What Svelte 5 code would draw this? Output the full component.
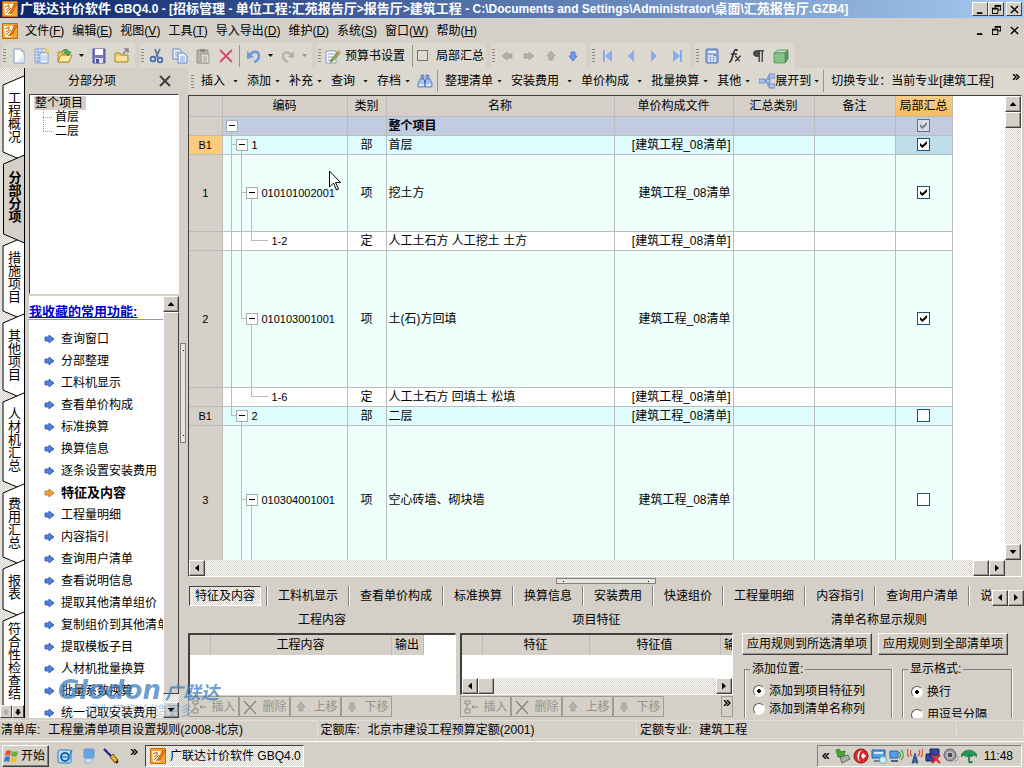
<script lang="ts">
	type Row = {
		no: string;
		h: number;
		kind: 'root' | 'part' | 'item' | 'quota';
		guides: string[];
		code: string;
		type: string;
		name: string;
		file: string;
		check: boolean | null;
		current?: boolean;
	};

	const title =
		'广联达计价软件 GBQ4.0 - [招标管理 - 单位工程:汇苑报告厅>报告厅>建筑工程 - C:\\Documents and Settings\\Administrator\\桌面\\汇苑报告厅.GZB4]';
	// runs of Chinese are set one size larger than the Latin text
	const titleRuns = title.split(/([\u4e00-\u9fff]+)/);

	const menus = [
		['文件', 'F'],
		['编辑', 'E'],
		['视图', 'V'],
		['工具', 'T'],
		['导入导出', 'D'],
		['维护', 'D'],
		['系统', 'S'],
		['窗口', 'W'],
		['帮助', 'H']
	];

	const sideTabs = [
		{ label: '工程概况', h: 87 },
		{ label: '分部分项', h: 90 },
		{ label: '措施项目', h: 85 },
		{ label: '其他项目', h: 87 },
		{ label: '人材机汇总', h: 99 },
		{ label: '费用汇总', h: 84 },
		{ label: '报表', h: 60 },
		{ label: '符合性检查结', h: 104 }
	];

	const favourites = [
		'查询窗口',
		'分部整理',
		'工料机显示',
		'查看单价构成',
		'标准换算',
		'换算信息',
		'逐条设置安装费用',
		'特征及内容',
		'工程量明细',
		'内容指引',
		'查询用户清单',
		'查看说明信息',
		'提取其他清单组价',
		'复制组价到其他清单',
		'提取模板子目',
		'人材机批量换算',
		'批量系数换算',
		'统一记取安装费用'
	];

	const file = '建筑工程_08清单';

	const rows: Row[] = [
		{ no: '', h: 19, kind: 'root', guides: [], code: '', type: '', name: '整个项目', file: '', check: true },
		{ no: 'B1', h: 19, kind: 'part', guides: ['tee'], code: '1', type: '部', name: '首层', file: `[${file}]`, check: true, current: true },
		{ no: '1', h: 77, kind: 'item', guides: ['pass', 'tee'], code: '010101002001', type: '项', name: '挖土方', file, check: true },
		{ no: '', h: 19, kind: 'quota', guides: ['pass', 'pass', 'elbow'], code: '1-2', type: '定', name: '人工土石方 人工挖土 土方', file: `[${file}]`, check: null },
		{ no: '2', h: 137, kind: 'item', guides: ['pass', 'end'], code: '010103001001', type: '项', name: '土(石)方回填', file, check: true },
		{ no: '', h: 19, kind: 'quota', guides: ['pass', 'none', 'elbow'], code: '1-6', type: '定', name: '人工土石方 回填土 松填', file: `[${file}]`, check: null },
		{ no: 'B1', h: 19, kind: 'part', guides: ['end'], code: '2', type: '部', name: '二层', file: `[${file}]`, check: false },
		{ no: '3', h: 149, kind: 'item', guides: ['none', 'tee'], code: '010304001001', type: '项', name: '空心砖墙、砌块墙', file, check: false }
	];

	const detailTabs = [
		'特征及内容',
		'工料机显示',
		'查看单价构成',
		'标准换算',
		'换算信息',
		'安装费用',
		'快速组价',
		'工程量明细',
		'内容指引',
		'查询用户清单',
		'说明信息'
	];

	const editButtons = [
		['insert', '插入'],
		['delete', '删除'],
		['up', '上移'],
		['down', '下移']
	];

	const trayIcons = ['device', 'shield', 'monitor', 'network', 'antenna', 'offline', 'speaker', 'umbrella'];

	let activeSide = $state('分部分项');
	let activeFavourite = $state('特征及内容');
	let activeDetail = $state('特征及内容');
</script>

{#snippet icon(name: string)}
	<svg class="icon" viewBox="0 0 16 16" aria-hidden="true">
		{#if name === 'logo'}
			<rect x="0" y="0" width="16" height="16" rx="1" fill="#c8690c" />
			<rect x="1" y="1" width="14" height="14" fill="#f5a52c" />
			<path d="M2 3h9l-1 11H3z" fill="#fff6df" />
			<path d="M3 6l4-2v3L4 9M4 12l5-5M6 13l4-4" stroke="#b8610e" stroke-width="1" fill="none" />
			<path d="M8 11l5-9 2 1-5 9-2 1z" fill="#e87d10" stroke="#a8540a" stroke-width=".6" />
		{:else if name === 'new'}
			<path d="M3 1h7l3 3v11H3z" fill="#fff" stroke="#7f9cc8" />
			<path d="M10 1v3h3z" fill="#9fb8df" />
			<path d="M5 14h8V7z" fill="#dfe9f8" />
		{:else if name === 'sheet'}
			<path d="M1 1h11v14H1z" fill="#e9f0fb" stroke="#83a3d4" />
			<path d="M1 4h11M1 7h11M1 10h11M1 13h11M4 1v14M8 1v14" stroke="#83a3d4" />
			<path d="M6 5h8v10H6z" fill="#fff" stroke="#7c9cd0" />
			<path d="M8 7v6M10 7v6M12 7v6" stroke="#9ab6e2" />
			<path d="M13 0v6M10 3h6M11 1l4 4M15 1l-4 4" stroke="#f3cf57" />
		{:else if name === 'open'}
			<path d="M1 14V4h4l1 2h6v8z" fill="#f1cf6c" stroke="#b18c2c" />
			<path d="M1 14l3-7h11l-3 7z" fill="#ffe9a0" stroke="#b18c2c" />
			<path d="M5 4c2-4 6-3 7 0h2l-3 4-4-4h2c-1-2-3-1-4 0z" fill="#4fae44" stroke="#2d7d28" stroke-width=".6" />
		{:else if name === 'save'}
			<path d="M2 1h12v14H2z" fill="#7478c8" stroke="#4a4e9c" />
			<path d="M4 1h8v6H4z" fill="#fff" />
			<path d="M4 10h8v5H4z" fill="#d9def2" />
			<path d="M5 11h3v4H5z" fill="#4a4e9c" />
		{:else if name === 'exit'}
			<path d="M1 14V5h5l1 2h7v7z" fill="#eec86a" stroke="#ac8a34" />
			<path d="M2 13V8h11v5z" fill="#f9e2a0" />
			<path d="M9 6l4-4M10 1h4v4" stroke="#7a7f95" fill="none" stroke-width="1.4" />
		{:else if name === 'cut'}
			<path d="M6 1l3 8M11 1L7 9" stroke="#62759f" stroke-width="1.8" />
			<circle cx="4" cy="11" r="2.4" fill="none" stroke="#3f6bb4" stroke-width="1.6" />
			<circle cx="11" cy="12" r="2.4" fill="none" stroke="#3f6bb4" stroke-width="1.6" />
		{:else if name === 'copy'}
			<path d="M1 1h6l2 2v8H1z" fill="#eef4ff" stroke="#5e88c9" />
			<path d="M3 4h4M3 6h4M3 8h4" stroke="#82a5dc" />
			<path d="M6 5h6l3 3v7H6z" fill="#eef4ff" stroke="#5e88c9" />
			<path d="M8 9h5M8 11h5M8 13h5" stroke="#82a5dc" />
		{:else if name === 'paste'}
			<path d="M2 2h11v13H2z" fill="#b5b2aa" stroke="#96938b" />
			<path d="M5 1h5v3H5z" fill="#8d8a83" />
			<path d="M6 6h8v9H6z" fill="#dedbd3" stroke="#9d9a92" />
			<path d="M8 9h4M8 11h4M8 13h4" stroke="#a9a69e" />
		{:else if name === 'cross'}
			<path d="M2 2l12 12M14 2L2 14" stroke="#d9486a" stroke-width="1.8" />
		{:else if name === 'undo'}
			<path d="M4 7c3-5 9-4 9 1 0 3-2 5-5 6" fill="none" stroke="#6f97dd" stroke-width="2.4" />
			<path d="M1 3v8l7-2z" fill="#6f97dd" />
		{:else if name === 'redo'}
			<path d="M11 7C8 3 3 4 3 8c0 3 2 5 5 6" fill="none" stroke="#b3b0a8" stroke-width="2.2" />
			<path d="M14 3v7l-6-1z" fill="#b3b0a8" />
		{:else if name === 'edit'}
			<path d="M1 3h10v12H1z" fill="#f8fbff" stroke="#8e9db8" />
			<path d="M3 6h6M3 9h5M3 12h4" stroke="#8e9db8" />
			<path d="M6 12l7-9 2 2-7 8-3 1z" fill="#9aab58" stroke="#5f6a33" stroke-width=".7" />
			<path d="M12 4l1-2 3 2-1 2z" fill="#e0a040" />
		{:else if name === 'left'}
			<path d="M3 8l5-4v2h5v4H8v2z" fill="#b5b2ab" stroke="#9d9a93" stroke-width=".7" />
		{:else if name === 'right'}
			<path d="M13 8L8 4v2H3v4h5v2z" fill="#b5b2ab" stroke="#9d9a93" stroke-width=".7" />
		{:else if name === 'up'}
			<path d="M8 3l4 5h-2v4H6V8H4z" fill="#b5b2ab" stroke="#9d9a93" stroke-width=".7" />
		{:else if name === 'down'}
			<path d="M8 13l4-5h-2V4H6v4H4z" fill="#b5b2ab" stroke="#9d9a93" stroke-width=".7" />
		{:else if name === 'downBlue'}
			<path d="M8 13l4-5h-2V4H6v4H4z" fill="#7599ea" stroke="#4c6fc4" stroke-width=".8" />
		{:else if name === 'first'}
			<path d="M3 2h2v12H3z" fill="#86acee" />
			<path d="M12 2v12L5 8z" fill="#86acee" />
		{:else if name === 'prev'}
			<path d="M11 2v12L5 8z" fill="#86acee" />
		{:else if name === 'next'}
			<path d="M5 2v12l6-6z" fill="#86acee" />
		{:else if name === 'last'}
			<path d="M11 2h2v12h-2z" fill="#86acee" />
			<path d="M4 2v12l7-6z" fill="#86acee" />
		{:else if name === 'calc'}
			<rect x="2" y="1" width="12" height="14" rx="1" fill="#8fa9df" stroke="#5b79b9" />
			<path d="M4 3h8v2H4z" fill="#eef4ff" />
			<path d="M4 8h8M4 10.500h8M4 13h8" stroke="#fff" stroke-width="1.500" stroke-dasharray="2 1" />
			<path d="M10 7h2v1h-2z" fill="#e05050" />
		{:else if name === 'formula'}
			<path d="M2 14c3 1 4-10 6-12 1-1 2 0 2 1M4 6h6" stroke="#33373d" stroke-width="1.700" fill="none" />
			<path d="M8 8c2 0 3 5 5 5M14 8c-2 0-4 5-6 5" stroke="#33373d" stroke-width="1.300" fill="none" />
		{:else if name === 'mark'}
			<path d="M8 2H14v1.500H13V14h-1.500V3.500H10V14H8.500V9C4 9 3 7 3 5.500 3 3 5 2 8 2z" fill="#4a4c52" />
		{:else if name === 'cube'}
			<path d="M1 5l4-3h10l-3 3z" fill="#b3deb3" stroke="#4c8650" stroke-width=".7" />
			<path d="M12 5l3-3v9l-3 4z" fill="#5c9c60" stroke="#3f7444" stroke-width=".7" />
			<path d="M1 5h11v10H1z" fill="#86c58a" stroke="#4c8650" stroke-width=".7" />
		{:else if name === 'find'}
			<path d="M4 2h3v4H4zM9 2h3v4H9z" fill="#7c9cd8" stroke="#5577b8" stroke-width=".6" />
			<path d="M3 6h4l1 3v5H1v-4zM9 6h4l2 4v4H8V9z" fill="#a3bfee" stroke="#5577b8" stroke-width=".8" />
			<path d="M2 11h5v2H2zM9 11h5v2H9z" fill="#dbe7fb" />
			<path d="M7 7h2v3H7z" fill="#4b6db2" />
		{:else if name === 'expand'}
			<path d="M5 8h4M9 3v10M9 3h2M9 13h2" stroke="#6986b9" fill="none" />
			<path d="M0 6h6v4H0zM10 1h6v4h-6zM10 11h6v4h-6zM7 6h4v4H7z" fill="#a9c4f2" stroke="#5f82c4" stroke-width=".8" />
		{:else if name === 'insert'}
			<path d="M2 2h5v3H2zM2 10h5v4H2zM4 5v5M15 8H9M11 6L9 8l2 2" fill="none" stroke="#8e8b84" />
		{:else if name === 'delete'}
			<path d="M2 2l12 13M14 2L2 15" stroke="#8e8b84" stroke-width="1.500" />
		{:else if name === 'arrow'}
			<path d="M4 6h4V4l5 4-5 4v-2H4z" class="fill" />
		{:else if name === 'windows'}
			<path d="M3 3c2-1 4-1 5 0L7 8C6 7 4 7 2 8z" fill="#e2542b" />
			<path d="M9 3c2 1 4 1 6 0l-1 5c-2 1-4 1-6 0z" fill="#6cae3c" />
			<path d="M2 9c2-1 4-1 5 0l-1 5c-1-1-3-1-5 0z" fill="#3c74d4" />
			<path d="M8 9c2 1 4 1 6 0l-1 5c-2 1-4 1-6 0z" fill="#f4c02e" />
		{:else if name === 'outlook'}
			<rect x="1" y="2" width="13" height="13" rx="2" fill="#bfe1f7" stroke="#2d7db8" />
			<circle cx="8" cy="9" r="4" fill="none" stroke="#1763a3" stroke-width="2" />
			<path d="M5 9h7l3-7" stroke="#2f8ccc" stroke-width="1.400" fill="none" />
		{:else if name === 'desktop'}
			<rect x="4" y="1" width="10" height="9" rx="1" fill="#5ea6ee" stroke="#8492b0" />
			<path d="M5 12c2-2 6-2 8 0l-2 3H5z" fill="#cfdcf2" stroke="#94a6c9" stroke-width=".7" />
		{:else if name === 'brush'}
			<path d="M1 1l7 7" stroke="#2222a8" stroke-width="2.400" />
			<path d="M7 9l3-3 5 6-3 3z" fill="#e5b22d" stroke="#6b4c10" />
			<path d="M13 15l2-2" stroke="#222" stroke-width="2" />
		{:else if name === 'device'}
			<path d="M1 2l3-1 2 3 4-1-1 6H3z" fill="#48a63c" stroke="#216a1d" stroke-width=".7" />
			<path d="M5 9l8-2 2 4-8 4z" fill="#a4b2a8" stroke="#49544c" stroke-width=".8" />
		{:else if name === 'shield'}
			<circle cx="8" cy="8" r="7" fill="#d8292b" stroke="#8d1010" />
			<path d="M9 2C4 3 3 10 7 14 5 9 6 5 9 2z" fill="#fff" />
			<path d="M10 5l3 3-3 3-2-3z" fill="#fff" />
		{:else if name === 'monitor'}
			<path d="M1 2h13v8H1z" fill="#4f9fe4" stroke="#285f9c" />
			<path d="M3 4h9v2H3z" fill="#d8ecff" />
			<path d="M3 13h7" stroke="#6982a0" stroke-width="2" />
			<circle cx="12" cy="12" r="3.500" fill="#d6eef6" stroke="#6aa7bf" />
		{:else if name === 'network'}
			<path d="M1 3h8v7H1z" fill="#55a4ea" stroke="#2d639d" />
			<path d="M2 13h7" stroke="#3e6388" stroke-width="2" />
			<path d="M10 4c2 2 2 4 0 6M12 2c3 3 3 7 0 10" stroke="#43a63b" stroke-width="1.300" fill="none" />
		{:else if name === 'antenna'}
			<path d="M8 5l-3 10h2l1-4 1 4h2z" fill="#35598f" stroke="#35598f" />
			<path d="M5 8C3 6 3 4 4 2M11 8c2-2 2-4 1-6M2 9C0 6 0 3 1 1M14 9c2-3 2-6 1-8" stroke="#dc5b42" stroke-width="1.400" fill="none" />
		{:else if name === 'offline'}
			<path d="M5 1h9v7H5zM1 6h8v7H1z" fill="#34459e" stroke="#1a2566" />
			<path d="M7 7l8 8M15 7l-8 8" stroke="#de2b2b" stroke-width="2.200" />
		{:else if name === 'speaker'}
			<circle cx="7" cy="7" r="6" fill="#989ca4" stroke="#5c6068" />
			<circle cx="7" cy="7" r="3" fill="#4b4f58" stroke="#d5d8de" />
			<path d="M11 14c3-1 4-3 4-6" stroke="#8d94c4" fill="none" />
		{:else if name === 'umbrella'}
			<path d="M0 9c0-9 16-9 16 0l-3-2-3 2-2-2-2 2-3-2z" fill="#1f9a53" stroke="#0d6a37" stroke-width=".6" />
			<path d="M8 7v6c0 2 3 2 3 0" stroke="#0d6a37" stroke-width="1.500" fill="none" />
		{/if}
	</svg>
{/snippet}

{#snippet winButtons()}
	<button aria-label="最小化"><svg viewBox="0 0 10 10"><path d="M1 8h6v2H1z" /></svg></button>
	<button aria-label="还原"
		><svg viewBox="0 0 10 10"><path d="M3 0h7v6H7v4H0V3h3zM4 2v1h3v2h2V2zM1 5v4h5V5z" fill-rule="evenodd" /></svg></button
	>
	<button class="close" aria-label="关闭"
		><svg viewBox="0 0 10 10"><path d="M1 1l8 8M9 1L1 9" stroke="#000" stroke-width="1.600" /></svg></button
	>
{/snippet}

{#snippet tool(name: string, label: string)}
	<button class="tool" aria-label={label}>{@render icon(name)}</button>
{/snippet}

{#snippet caret()}
	<i class="caret"></i>
{/snippet}

{#snippet scrollBtn(dir: string)}
	<button class="scroll-btn" aria-label="滚动"><i class="tri {dir}"></i></button>
{/snippet}

{#snippet drop(label: string)}
	<button class="drop">{label}{@render caret()}</button>
{/snippet}

{#snippet chevrons()}
	<svg class="chevrons" viewBox="0 0 8 6" aria-hidden="true"><path d="M1 0l3 3-3 3M4 0l3 3-3 3" /></svg>
{/snippet}

{#snippet editBar()}
	<div class="edit-bar">
		{#each editButtons as [name, label]}
			<button disabled>{@render icon(name)}{label}</button>
		{/each}
	</div>
{/snippet}

<div class="app">
	<header class="title-bar">
		{@render icon('logo')}
		<h1>{#each titleRuns as run, i}{#if i % 2}<span>{run}</span>{:else}{run}{/if}{/each}</h1>
		<div class="win-buttons">{@render winButtons()}</div>
	</header>

	<nav class="menu-bar">
		{@render icon('logo')}
		{#each menus as [label, key]}
			<button>{label}(<u>{key}</u>)</button>
		{/each}
		<div class="win-buttons flat">{@render winButtons()}</div>
	</nav>

	<div class="toolbar">
		<div class="group">
			<i class="grip"></i>
			{@render tool('new', '新建')}
			{@render tool('sheet', '新建表')}
			{@render tool('open', '打开')}
			{@render caret()}
			{@render tool('save', '保存')}
			{@render tool('exit', '关闭')}
		</div>
		<div class="group">
			<i class="grip"></i>
			{@render tool('cut', '剪切')}
			{@render tool('copy', '复制')}
			{@render tool('paste', '粘贴')}
			{@render tool('cross', '删除')}
			<i class="sep"></i>
			{@render tool('undo', '撤销')}
			{@render caret()}
			{@render tool('redo', '恢复')}
			<i class="caret off"></i>
		</div>
		<div class="group">
			<i class="grip"></i>
			<button class="text-tool">{@render icon('edit')}预算书设置</button>
			<i class="sep"></i>
			<label class="check-tool"><input type="checkbox" class="flat-check" />局部汇总</label>
		</div>
		<div class="group nav">
			<i class="grip"></i>
			{@render tool('left', '左移')}
			{@render tool('right', '右移')}
			{@render tool('up', '上移')}
			{@render tool('downBlue', '下移')}
		</div>
		<div class="group">
			<i class="grip"></i>
			{@render tool('first', '首行')}
			{@render tool('prev', '上一行')}
			{@render tool('next', '下一行')}
			{@render tool('last', '末行')}
		</div>
		<div class="group">
			<i class="grip"></i>
			{@render tool('calc', '计算器')}
			{@render tool('formula', '函数')}
			{@render tool('mark', '段落')}
			{@render tool('cube', '图元')}
		</div>
	</div>

	<div class="body">
		<div class="side-tabs">
			<div class="tab-list">
				{#each sideTabs as tab}
					<button class="side-tab" class:active={tab.label === activeSide} style:height="{tab.h}px" onclick={() => (activeSide = tab.label)}>
						<svg viewBox="0 0 22 {tab.h}" aria-hidden="true">
							<path d="M22 1L1 10V{tab.h - 10}L22 {tab.h - 1}" />
						</svg>
						<span>{tab.label}</span>
					</button>
				{/each}
			</div>
			<div class="tab-scroll">
				<button aria-label="上一页">{@render icon('up')}</button>
				<button aria-label="下一页" class="dark">{@render icon('down')}</button>
			</div>
		</div>

		<aside class="side">
			<div class="side-head">
				<h2>分部分项</h2>
				<button aria-label="关闭"><svg viewBox="0 0 12 12"><path d="M1 1l10 10M11 1L1 11" /></svg></button>
			</div>
			<ul class="project-tree">
				<li>
					<span class="selected">整个项目</span>
					<ul>
						<li>首层</li>
						<li>二层</li>
					</ul>
				</li>
			</ul>
			<div class="favourites">
				<div class="fav-list">
					<h3>我收藏的常用功能:</h3>
					{#each favourites as item}
						<a href="#top" class:on={item === activeFavourite} onclick={() => (activeFavourite = item)}>{@render icon('arrow')}{item}</a>
					{/each}
				</div>
				<div class="vscroll plain">
					{@render scrollBtn('n')}
					<i class="long-thumb"></i>
					<i class="track"></i>
					{@render scrollBtn('s')}
				</div>
			</div>
			<div class="watermark">
				<p><b>Glodon</b>广联达</p>
				<small>成为了您 创造更多</small>
			</div>
		</aside>
		<div class="v-splitter"><i></i></div>

		<main>
			<div class="toolbar second">
				<i class="grip"></i>
				<button class="drop wide">插入{@render caret()}</button>
				{@render drop('添加')}
				{@render drop('补充')}
				<button class="drop wide">查询{@render caret()}</button>
				{@render drop('存档')}
				{@render tool('find', '查找')}
				<i class="sep"></i>
				{@render drop('整理清单')}
				<button class="drop wide">安装费用{@render caret()}</button>
				<button class="drop wide">单价构成{@render caret()}</button>
				{@render drop('批量换算')}
				{@render drop('其他')}
				<button class="drop with-icon">{@render icon('expand')}展开到{@render caret()}</button>
				<i class="sep"></i>
				<button class="drop">切换专业：当前专业[建筑工程]</button>
				<button class="more" aria-label="更多">{@render chevrons()}</button>
			</div>

			<div class="grid-box">
				<div class="grid-view">
					<table class="bill">
						<colgroup>
							<col class="c-no" />
							<col class="c-code" />
							<col class="c-type" />
							<col class="c-name" />
							<col class="c-file" />
							<col class="c-sum" />
							<col class="c-sum" />
							<col class="c-part" />
						</colgroup>
						<thead>
							<tr>
								<th></th>
								<th>编码</th>
								<th>类别</th>
								<th>名称</th>
								<th>单价构成文件</th>
								<th>汇总类别</th>
								<th>备注</th>
								<th class="hot">局部汇总</th>
							</tr>
						</thead>
						<tbody>
							{#each rows as row}
								<tr class={row.kind} class:current={row.current}>
									<td class="no">{row.no}</td>
									<td class="code">
										<div class="tree" style:height="{row.h - 1}px">
											{#each row.guides as guide}
												<i class="guide {guide}"></i>
											{/each}
											{#if row.kind !== 'quota'}
												<span class="node"><button aria-label="折叠"></button></span>
											{/if}
											<span>{row.code}</span>
										</div>
									</td>
									<td class="mid">{row.type}</td>
									<td>{row.name}</td>
									<td class="end">{row.file}</td>
									<td></td>
									<td></td>
									<td class="mid part-sum">
										{#if row.check !== null}
											<input type="checkbox" class="check" checked={row.check} disabled={row.kind === 'root'} aria-label="局部汇总" />
										{/if}
									</td>
								</tr>
							{/each}
						</tbody>
					</table>
				</div>
				<div class="vscroll">
					{@render scrollBtn('n')}
					<i class="thumb"></i>
					<i class="track"></i>
					{@render scrollBtn('s')}
				</div>
				<div class="hscroll">
					{@render scrollBtn('w')}
					<i class="track"></i>
					<i class="thumb"></i>
					{@render scrollBtn('e')}
				</div>
				<svg class="pointer" viewBox="0 0 12 21" aria-hidden="true">
					<path d="M.5 1v16l4-4 3 7 2-1-3-6.500h5z" fill="#fff" stroke="#000" />
				</svg>
			</div>

			<div class="h-splitter"><i></i></div>

			<div class="detail-tabs">
				<div class="detail-list">
					{#each detailTabs as tab}
						<button class:active={tab === activeDetail} onclick={() => (activeDetail = tab)}>{tab}</button>
					{/each}
				</div>
				<div class="tab-arrows">
					{@render scrollBtn('w')}
					{@render scrollBtn('e')}
				</div>
			</div>

			<div class="details">
				<section>
					<h4>工程内容</h4>
					<div class="sunken">
						<table class="mini">
							<thead>
								<tr><th class="w20"></th><th class="w180">工程内容</th><th class="w32">输出</th></tr>
							</thead>
						</table>
					</div>
					{@render editBar()}
				</section>

				<section>
					<h4>项目特征</h4>
					<div class="sunken">
						<table class="mini">
							<thead>
								<tr><th class="w20"></th><th class="w108">特征</th><th class="w132">特征值</th><th class="w32">输出</th></tr>
							</thead>
						</table>
						<div class="hscroll">
							{@render scrollBtn('w')}
							<i class="thumb"></i>
							<i class="track"></i>
							{@render scrollBtn('e')}
						</div>
					</div>
					<div class="edit-row">
						{@render editBar()}
						<button class="more boxed" aria-label="更多">{@render chevrons()}</button>
					</div>
				</section>

				<section class="rules">
					<h4>清单名称显示规则</h4>
					<div class="rule-buttons">
						<button>应用规则到所选清单项</button>
						<button>应用规则到全部清单项</button>
					</div>
					<div class="rule-sets">
						<fieldset>
							<legend>添加位置:</legend>
							<label><input type="radio" name="place" checked />添加到项目特征列</label>
							<label><input type="radio" name="place" />添加到清单名称列</label>
						</fieldset>
						<fieldset class="format">
							<legend>显示格式:</legend>
							<label><input type="radio" name="format" checked />换行</label>
							<label><input type="radio" name="format" />用逗号分隔</label>
						</fieldset>
					</div>
				</section>
			</div>
		</main>
	</div>

	<div class="status-bar">
		<div><span>清单库:</span><span>工程量清单项目设置规则(2008-北京)</span></div>
		<div><span>定额库:</span><span>北京市建设工程预算定额(2001)</span></div>
		<div><span>定额专业:</span><span>建筑工程</span></div>
		<div class="last"></div>
	</div>

	<footer class="task-bar">
		<button class="start">{@render icon('windows')}开始</button>
		<div class="quick">
			{@render tool('outlook', '邮件')}
			{@render tool('desktop', '显示桌面')}
			{@render tool('brush', '画笔')}
		</div>
		<button class="more" aria-label="更多">{@render chevrons()}</button>
		<button class="task">{@render icon('logo')}广联达计价软件 GBQ4.0</button>
		<div class="tray">
			<button class="fold" aria-label="折叠">{@render chevrons()}</button>
			{#each trayIcons as name}
				{@render icon(name)}
			{/each}
			<time>11:48</time>
		</div>
	</footer>
</div>

<style>
	:global(body) {
		background: #d4d0c8;
		overflow: hidden;
	}

	.app {
		--face: #d4d0c8;
		--light: #fff;
		--shade: #808080;
		--dark: #404040;
		display: flex;
		flex-direction: column;
		height: 100vh;
		overflow: hidden;
		background: var(--face);
		color: #000;
		font: 12px/16px 'Liberation Sans', 'Noto Sans CJK SC', sans-serif;
		white-space: nowrap;
	}

	.app :global(*) {
		box-sizing: border-box;
	}

	button,
	input {
		font: inherit;
		color: inherit;
	}

	button {
		margin: 0;
		padding: 0;
		border: 0;
		background: none;
	}

	h1,
	h2,
	h3,
	h4,
	p,
	ul {
		margin: 0;
		padding: 0;
		font-size: 12px;
		font-weight: normal;
	}

	.icon {
		width: 16px;
		height: 16px;
		flex: none;
		display: block;
	}

	/* title and menu */
	.title-bar {
		display: flex;
		align-items: center;
		height: 18px;
		padding: 0 2px;
		background: linear-gradient(90deg, #0a246a, #a6caf0);
		color: #fff;
	}

	.title-bar h1 {
		flex: 1;
		min-width: 0;
		margin-left: 2px;
		overflow: hidden;
		font-weight: bold;
		line-height: 18px;
	}

	.title-bar h1 span {
		font-size: 13px;
	}

	.win-buttons {
		display: flex;
		margin-left: auto;
	}

	.win-buttons button {
		display: grid;
		place-items: center;
		width: 16px;
		height: 14px;
		background: var(--face);
		border: 1px solid;
		border-color: #fff #404040 #404040 #fff;
	}

	.win-buttons svg {
		width: 9px;
		height: 9px;
	}

	.win-buttons .close {
		margin-left: 2px;
	}

	.flat button {
		border-color: transparent;
	}

	.menu-bar {
		display: flex;
		align-items: center;
		height: 25px;
		padding: 0 2px;
	}

	.menu-bar > button {
		padding: 0 4px;
	}

	.menu-bar .icon {
		margin-right: 3px;
	}

	/* toolbars */
	.toolbar {
		display: flex;
		align-items: center;
		gap: 5px;
		height: 25px;
		flex: none;
		padding-left: 2px;
	}

	.group {
		display: flex;
		align-items: center;
		height: 25px;
		background: #dbd8d0;
		padding-right: 2px;
	}

	.grip {
		flex: none;
		width: 3px;
		height: 13px;
		margin: 0 1px;
		background: repeating-linear-gradient(#8c8981 0 1px, transparent 1px 3px);
	}

	.tool {
		display: grid;
		place-items: center;
		width: 23px;
		height: 22px;
	}

	.nav .tool {
		width: 22px;
	}

	.caret {
		display: inline-block;
		flex: none;
		width: 5px;
		height: 3px;
		margin: 0 3px;
		background: #000;
		clip-path: polygon(0 0, 100% 0, 50% 100%);
	}

	.caret.off {
		background: #96938b;
	}

	.sep {
		flex: none;
		width: 1px;
		height: 22px;
		margin: 0 2px;
		background: #99968e;
	}

	.text-tool,
	.check-tool {
		display: flex;
		align-items: center;
		gap: 4px;
		padding: 0 5px 0 3px;
	}

	.check-tool {
		padding: 0 0 0 2px;
	}

	.flat-check {
		appearance: none;
		width: 11px;
		height: 11px;
		margin: 0 4px 0 0;
		border: 1px solid #77746c;
		background: #dedbd4;
	}

	.second {
		gap: 0;
		height: 26px;
		background: #dbd8d0;
	}

	.second .sep {
		margin: 0 1px;
	}

	.drop {
		display: flex;
		align-items: center;
		padding: 0 0 0 6px;
	}

	.drop .caret {
		margin: 0 3px 0 4px;
	}

	.drop.wide .caret {
		margin-left: 8px;
	}

	.with-icon .caret {
		margin-left: 3px;
	}

	.more {
		margin-left: auto;
		padding: 0 4px 8px;
	}

	.chevrons {
		display: block;
		width: 8px;
		height: 6px;
		fill: none;
		stroke: #000;
		stroke-width: 1.4;
	}

	/* vertical page tabs */
	.body {
		display: flex;
		flex: 1;
		min-height: 0;
	}

	.side-tabs {
		display: flex;
		flex-direction: column;
		flex: none;
		width: 25px;
		border-right: 1px solid #000;
		background: repeating-conic-gradient(#d4d0c8 0 25%, #f6f5f2 0 50%) 0 0 / 2px 2px;
	}

	.tab-list {
		display: flex;
		flex-direction: column;
		flex: 1;
		min-height: 0;
		padding: 7px 0 0 2px;
		overflow: hidden;
	}

	.side-tab {
		position: relative;
		display: grid;
		place-items: center;
		flex: none;
		width: 22px;
		margin-bottom: -8px;
		font-size: 13px;
		line-height: 22px;
	}

	.side-tab > * {
		grid-area: 1 / 1;
	}

	.side-tab svg {
		width: 22px;
		height: 100%;
		fill: #fff;
		stroke: #000;
	}

	.side-tab span {
		padding-bottom: 4px;
		writing-mode: vertical-rl;
	}

	.side-tab.active {
		z-index: 1;
		font-weight: bold;
	}

	.side-tab.active svg {
		width: 23px;
		fill: var(--face);
	}

	.tab-scroll {
		display: flex;
		height: 13px;
	}

	.tab-scroll button {
		display: grid;
		place-items: center;
		width: 12px;
		background: var(--face);
		border: 1px solid;
		border-color: #fff #404040 #404040 #fff;
	}

	.tab-scroll .icon {
		width: 10px;
		height: 10px;
	}

	.tab-scroll .dark .icon {
		filter: brightness(0);
	}

	/* left panel */
	.side {
		position: relative;
		display: flex;
		flex-direction: column;
		flex: none;
		width: 154px;
		padding-left: 4px;
	}

	.side-head {
		display: flex;
		align-items: center;
		height: 26px;
	}

	.side-head h2 {
		flex: 1;
		padding-left: 4px;
		text-align: center;
	}

	.side-head button {
		width: 28px;
		padding-left: 8px;
	}

	.side-head svg {
		display: block;
		width: 12px;
		height: 12px;
		stroke: #404040;
		stroke-width: 2;
	}

	.project-tree {
		height: 200px;
		flex: none;
		padding: 1px 0 0 4px;
		background: #fff;
		border: 1px solid;
		border-color: var(--dark) #fff #fff var(--dark);
		list-style: none;
		line-height: 14px;
	}

	.project-tree ul {
		margin-left: 9px;
		list-style: none;
	}

	.project-tree ul li {
		display: flex;
		align-items: center;
		background: repeating-linear-gradient(#999 0 1px, transparent 1px 2px) 0 0 / 1px 100% no-repeat;
	}

	.project-tree ul li:last-child {
		background-size: 1px 50%;
	}

	.project-tree ul li::before {
		content: '';
		width: 9px;
		height: 1px;
		margin-right: 3px;
		background: repeating-linear-gradient(90deg, #999 0 1px, transparent 1px 2px);
	}

	.selected {
		display: inline-block;
		padding: 0 3px 0 1px;
		background: var(--face);
	}

	.favourites {
		display: flex;
		flex: 1;
		min-height: 0;
		margin-top: 2px;
		background: #fff;
	}

	.fav-list {
		flex: 1;
		min-width: 0;
		overflow: hidden;
	}

	.fav-list h3 {
		height: 24px;
		margin-bottom: 8px;
		border-bottom: 1px solid #9a9a9a;
		color: #00c;
		font-size: 13px;
		font-weight: bold;
		line-height: 32px;
		text-decoration: underline;
	}

	.fav-list a {
		display: flex;
		align-items: center;
		gap: 4px;
		height: 22px;
		padding-left: 12px;
		color: #000;
		text-decoration: none;
	}

	.fill {
		fill: #4f7fdc;
		stroke: #274fa5;
		stroke-width: 0.8;
	}

	.fav-list .on {
		font-weight: bold;
		font-size: 13px;
	}

	.on .fill {
		fill: #f4a23a;
		stroke: #b46a12;
	}

	.watermark {
		position: absolute;
		left: 33px;
		bottom: 0;
		color: #3f7fbf;
		opacity: 0.75;
		pointer-events: none;
		z-index: 2;
	}

	.watermark p {
		font-size: 18px;
		font-style: italic;
		font-weight: bold;
		line-height: 22px;
	}

	.watermark b {
		margin-right: 4px;
		font-family: 'DejaVu Sans', sans-serif;
		font-size: 26px;
	}

	.watermark small {
		display: block;
		padding-left: 28px;
		font-size: 13px;
		line-height: 14px;
		opacity: 0.6;
	}

	.v-splitter {
		display: flex;
		align-items: center;
		flex: none;
		width: 9px;
	}

	.v-splitter i {
		width: 6px;
		height: 100px;
		margin-left: 1px;
		border: 1px solid #808080;
		background:
			linear-gradient(#000, #000) 50% 6px / 1px 1px no-repeat,
			linear-gradient(#000, #000) 50% 91px / 1px 1px no-repeat,
			#e6e4df;
	}

	/* scroll bars */
	.scroll-btn,
	.thumb {
		display: grid;
		place-items: center;
		flex: none;
		width: 16px;
		height: 16px;
		background: var(--face);
		border: 1px solid;
		border-color: #fff #404040 #404040 #fff;
		box-shadow: inset -1px -1px #9a978f;
	}

	.track {
		flex: 1;
		background: repeating-conic-gradient(#d4d0c8 0 25%, #fff 0 50%) 0 0 / 2px 2px;
	}

	.tri {
		width: 7px;
		height: 4px;
		background: #000;
	}

	.tri.n {
		clip-path: polygon(50% 0, 100% 100%, 0 100%);
	}

	.tri.s {
		clip-path: polygon(0 0, 100% 0, 50% 100%);
	}

	.tri.w,
	.tri.e {
		width: 4px;
		height: 7px;
	}

	.tri.w {
		clip-path: polygon(0 50%, 100% 0, 100% 100%);
	}

	.tri.e {
		clip-path: polygon(0 0, 100% 50%, 0 100%);
	}

	.vscroll {
		display: flex;
		flex-direction: column;
		width: 16px;
	}

	.hscroll {
		display: flex;
		height: 16px;
	}

	.long-thumb {
		flex: 50;
		border: 1px solid;
		border-color: #fff #404040 #404040 #fff;
		background: var(--face);
	}

	/* bill grid */
	main {
		display: flex;
		flex-direction: column;
		flex: 1;
		min-width: 0;
	}

	.grid-box {
		position: relative;
		display: grid;
		grid-template: minmax(0, 1fr) 16px / minmax(0, 1fr) 16px;
		flex: 1;
		min-height: 0;
		margin: 1px 2px 0 0;
		border: 1px solid;
		border-color: var(--dark) #fff #fff var(--dark);
	}

	.grid-view {
		overflow: hidden;
		background: #fff;
	}

	.bill {
		width: 763px;
		table-layout: fixed;
		border-collapse: collapse;
	}

	.c-no {
		width: 33px;
	}
	.c-code {
		width: 125px;
	}
	.c-type {
		width: 39px;
	}
	.c-name {
		width: 228px;
	}
	.c-file {
		width: 119px;
	}
	.c-sum {
		width: 81px;
	}
	.c-part {
		width: 57px;
	}

	.bill th {
		height: 20px;
		padding: 0;
		background: linear-gradient(#d4d0c8, #d6cfc9);
		border-right: 1px solid #b9bcbc;
		border-bottom: 1px solid #b9bcbc;
		font-weight: normal;
	}

	.bill th.hot {
		background: linear-gradient(#f6cf8a, #f5bd5c);
	}

	.bill td {
		height: 19px;
		padding: 0 2px;
		border-right: 1px solid #b9bcbc;
		border-bottom: 1px solid #b9bcbc;
		line-height: 16px;
	}

	.bill .no {
		background: var(--face);
		text-align: center;
		font-size: 11px;
	}

	.bill .mid {
		text-align: center;
	}

	.bill .end {
		text-align: right;
	}

	.bill .code {
		padding: 0;
		font-size: 11px;
	}

	.root {
		background: #c1cce0;
		font-weight: bold;
	}

	.part {
		background: #dffdff;
	}

	.item {
		background: #effffb;
	}

	.bill .current .no {
		background: #ffcb7d;
	}

	.current .part-sum {
		background: #bfdde8;
	}

	.tree {
		display: flex;
		align-items: center;
		padding-left: 8px;
	}

	.guide {
		align-self: stretch;
		flex: none;
		width: 10px;
		background: linear-gradient(#b9bcbc, #b9bcbc) 0 0 / 1px 100% no-repeat, linear-gradient(#b9bcbc, #b9bcbc) 0 50% / 100% 1px no-repeat;
	}

	.guide.pass {
		background-size: 1px 100%, 0 0;
	}

	.guide.end {
		background-size: 1px 50%, 100% 1px;
	}

	.guide.elbow {
		width: 17px;
		margin-right: 4px;
		background-size: 1px 50%, 100% 1px;
	}

	.guide.none {
		background: none;
	}

	.node {
		display: grid;
		place-items: center;
		align-self: stretch;
		width: 11px;
		margin: 0 5px 0 -5px;
		background: linear-gradient(#b9bcbc, #b9bcbc) 5px 100% / 1px 50% no-repeat;
	}

	.node button {
		width: 12px;
		height: 12px;
		border: 1px solid #a9acac;
		background: linear-gradient(#000, #000) 50% 50% / 6px 1px no-repeat #fff;
	}

	.check {
		appearance: none;
		position: relative;
		display: block;
		width: 13px;
		height: 13px;
		margin: 0 auto;
		border: 1px solid #1c5180;
		background: #fff;
	}

	.check:checked::after {
		content: '';
		position: absolute;
		left: 2px;
		top: 2px;
		width: 7px;
		height: 7px;
		background: #000;
		clip-path: polygon(0 30%, 35% 62%, 100% 0, 100% 38%, 35% 100%, 0 68%);
	}

	.check:disabled {
		background: #d8dce4;
		border-color: #5a7593;
	}

	.check:disabled::after {
		background: #7d8288;
	}

	.pointer {
		position: absolute;
		left: 140px;
		top: 74px;
		width: 12px;
		height: 21px;
	}

	/* lower pane */
	.h-splitter {
		display: flex;
		justify-content: center;
		height: 8px;
	}

	.h-splitter i {
		width: 100px;
		height: 6px;
		margin-top: 1px;
		border: 1px solid #808080;
		background:
			linear-gradient(#000, #000) 6px 50% / 1px 1px no-repeat,
			linear-gradient(#000, #000) 91px 50% / 1px 1px no-repeat,
			#e6e4df;
	}

	.detail-tabs {
		display: flex;
		align-items: center;
		height: 22px;
	}

	.detail-list {
		display: flex;
		flex: 1;
		min-width: 0;
		overflow: hidden;
	}

	.detail-list button {
		flex: none;
		height: 20px;
		padding: 0 10px 0 11px;
		border-left: 1px solid #808080;
		box-shadow: inset 1px 0 #fff;
	}

	.detail-list .active {
		margin: 0 5px 0 1px;
		padding: 0 5px;
		background: repeating-conic-gradient(#d4d0c8 0 25%, #fff 0 50%) 0 0 / 2px 2px;
		border: 1px solid;
		border-color: var(--dark) #fff #fff var(--dark);
		box-shadow: none;
	}

	.tab-arrows {
		display: flex;
		padding-top: 3px;
	}

	.details {
		display: grid;
		grid-template-columns: 268fr 273fr 287fr;
		column-gap: 4px;
		flex: none;
		height: 111px;
		overflow: hidden;
	}

	section {
		display: flex;
		flex-direction: column;
		min-width: 0;
	}

	h4 {
		height: 26px;
		line-height: 26px;
		text-align: center;
	}

	.sunken {
		display: flex;
		flex-direction: column;
		justify-content: space-between;
		height: 62px;
		overflow: hidden;
		background: #fff;
		border: 2px solid;
		border-color: var(--dark) #fff #fff var(--dark);
		border-width: 2px 1px 1px 2px;
	}

	.mini {
		table-layout: fixed;
		width: 0;
		border-collapse: collapse;
	}

	.mini th {
		height: 20px;
		padding: 0;
		background: #d4d0c8;
		border-right: 1px solid #bdbab3;
		font-weight: normal;
	}

	.w20 {
		width: 20px;
	}
	.w32 {
		width: 32px;
	}
	.w108 {
		width: 107px;
	}
	.w132 {
		width: 131px;
	}
	.w180 {
		width: 181px;
	}

	.edit-row {
		display: flex;
		justify-content: space-between;
	}

	.edit-bar {
		display: flex;
		margin-top: 1px;
	}

	.edit-bar button {
		display: flex;
		align-items: center;
		justify-content: center;
		gap: 4px;
		width: 51px;
		height: 21px;
		border: 1px solid #a09d95;
		color: #96938b;
	}

	.boxed {
		width: 12px;
		height: 21px;
		margin: 1px 0 0;
		padding: 0 1px 8px;
		border: 1px solid #a09d95;
	}

	.rules {
		padding: 0 8px 0 5px;
	}

	.rule-buttons {
		display: flex;
		gap: 6px;
	}

	.rule-buttons button {
		width: 130px;
		height: 22px;
		border: 1px solid;
		border-color: #fff #404040 #404040 #fff;
		box-shadow: inset -1px -1px #9a978f;
	}

	.rule-sets {
		display: flex;
		align-items: flex-start;
		gap: 10px;
		padding: 7px 0 0 2px;
	}

	fieldset {
		width: 148px;
		height: 80px;
		flex: none;
		margin: 0;
		padding: 6px 0 0 8px;
		border: 1px solid #808080;
		box-shadow: 1px 0 #fff, inset 1px 0 #fff;
	}

	.format {
		width: 110px;
	}

	legend {
		margin-left: -3px;
		padding: 0 2px;
		line-height: 14px;
	}

	fieldset label {
		display: flex;
		align-items: center;
		gap: 4px;
		height: 18px;
	}

	.format label {
		height: 26px;
	}

	.format label:first-of-type {
		height: 20px;
	}

	fieldset input {
		appearance: none;
		width: 12px;
		height: 12px;
		margin: 0;
		border: 1px solid;
		border-color: #606060 #f4f3f0 #f4f3f0 #606060;
		border-radius: 50%;
		background: #fff;
	}

	fieldset input:checked {
		background: radial-gradient(circle, #000 2px, #fff 2px);
	}

	/* bottom bars */
	.status-bar {
		display: flex;
		gap: 2px;
		height: 23px;
		padding-top: 2px;
	}

	.status-bar div {
		display: flex;
		gap: 8px;
		flex: 318;
		height: 19px;
		padding-left: 1px;
		border: 1px solid #e2dfd9;
		border-left: 0;
		line-height: 18px;
	}

	.status-bar .last {
		flex: 64;
	}

	.task-bar {
		display: flex;
		align-items: center;
		height: 27px;
		flex: none;
		padding: 1px 2px 0;
		border-top: 1px solid #fff;
	}

	.start {
		display: flex;
		align-items: center;
		gap: 2px;
		width: 47px;
		height: 22px;
		border: 1px solid;
		border-color: #fff #404040 #404040 #fff;
		box-shadow: inset -1px -1px #808080;
	}

	.quick {
		display: flex;
		padding-left: 4px;
	}

	.task-bar > .more {
		margin: 0 3px 0 4px;
	}

	.task {
		display: flex;
		align-items: center;
		gap: 4px;
		width: 159px;
		height: 22px;
		padding-left: 4px;
		border: 1px solid;
		border-color: var(--dark) #fff #fff var(--dark);
		background: repeating-conic-gradient(#d4d0c8 0 25%, #fff 0 50%) 0 0 / 2px 2px;
	}

	.tray {
		display: flex;
		align-items: center;
		gap: 2px;
		height: 22px;
		margin-left: auto;
		padding: 0 8px 0 4px;
		border: 1px solid;
		border-color: #808080 #fff #fff #808080;
	}

	.fold {
		width: 11px;
	}

	.fold .chevrons {
		rotate: 180deg;
	}

	.tray time {
		margin-left: 5px;
	}
</style>
